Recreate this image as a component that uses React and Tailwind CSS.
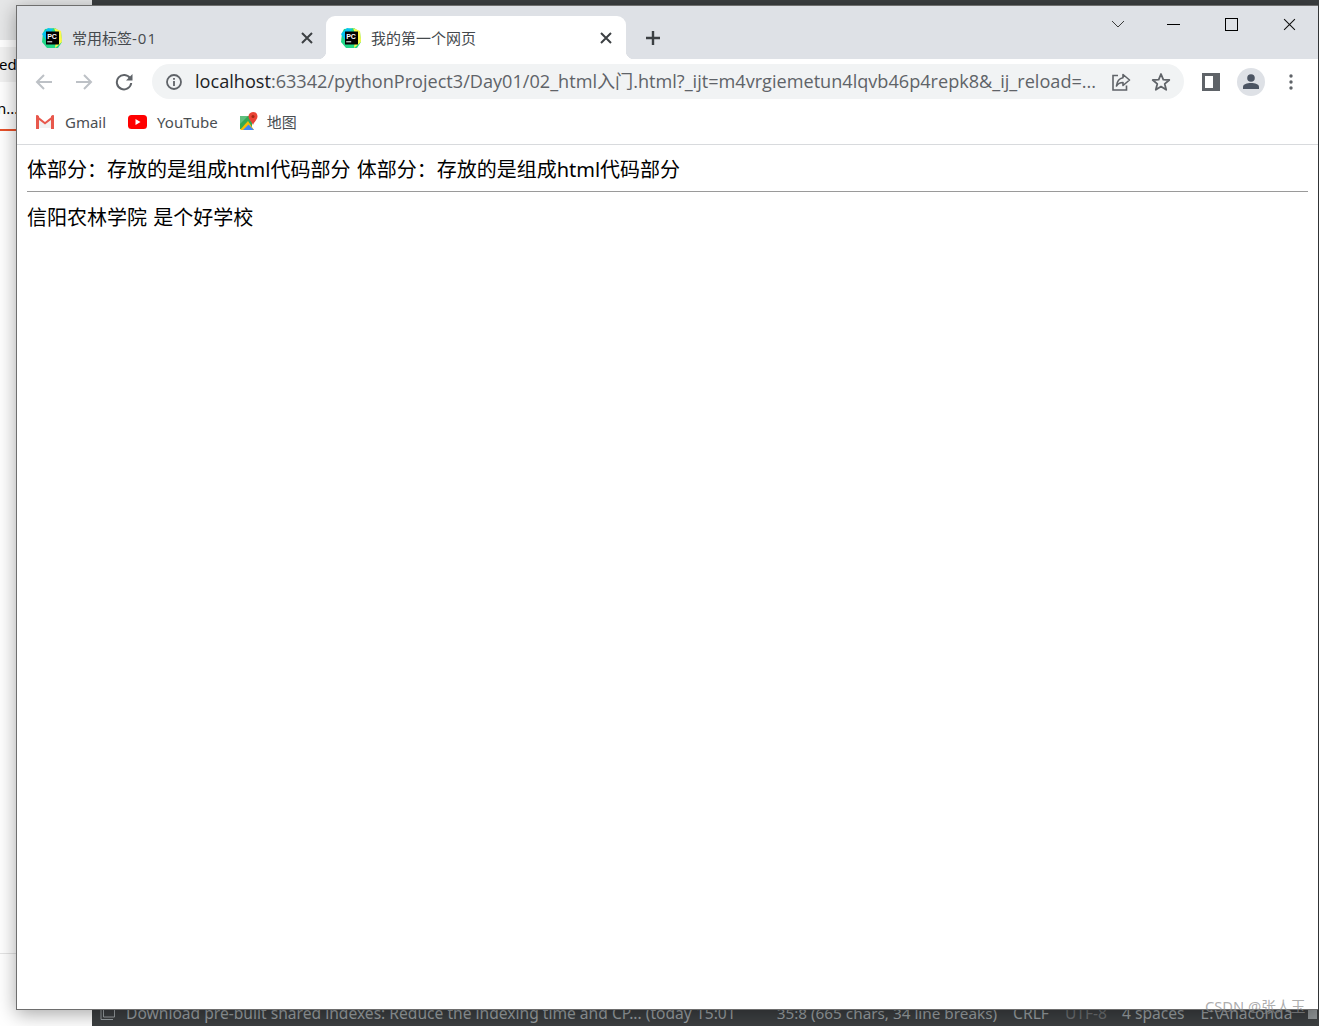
import React from "react";

const ui = { fontFamily: '"Open Sans","Noto Sans CJK SC",sans-serif' };
const cn = { fontFamily: '"Noto Sans","Noto Sans CJK SC",sans-serif' };

function PcIcon() {
  return (
    <svg width="20" height="20" viewBox="0 0 20 20" className="shrink-0">
      <path d="M3 1 L13 0 L19 4 L20 14 L16 20 L5 20 L0 14 L1 5 Z" fill="#21d789" />
      <path d="M12 0 L19 3 L20 13 L15 8 Z" fill="#fcf84a" />
      <path d="M0 6 L6 0 L11 1 L4 12 Z" fill="#07c3f2" />
      <path d="M13 20 L20 14 L19 8 L14 12 Z" fill="#fcf84a" />
      <rect x="4" y="3.5" width="13" height="13" fill="#000" />
      <text x="5.2" y="10.5" fontSize="7" fontWeight="700" fill="#fff" fontFamily="Liberation Sans">PC</text>
      <rect x="5.2" y="13.3" width="5" height="1" fill="#fff" />
    </svg>
  );
}

function X({ size = 12, sw = 2, color = "#3c4043" }) {
  return (
    <svg width={size} height={size} viewBox="0 0 12 12">
      <path d="M1 1 L11 11 M11 1 L1 11" stroke={color} strokeWidth={sw} fill="none" />
    </svg>
  );
}

function Gmail() {
  return (
    <svg width="20" height="16" viewBox="0 0 20 16">
      <path d="M2 2 L10 8.5 L18 2 V14 H2 Z" fill="#f1f1f1" />
      <path d="M1 15 V2 Q1 0.8 2.3 1 L4 2 V15 Z" fill="#e8584c" />
      <path d="M19 15 V2 Q19 0.8 17.7 1 L16 2 V15 Z" fill="#e8584c" />
      <path d="M1.5 1.2 L10 8 L18.5 1.2 L18.5 4 L10 10.5 L1.5 4 Z" fill="#e8584c" />
    </svg>
  );
}

function YouTube() {
  return (
    <svg width="19" height="14" viewBox="0 0 19 14">
      <rect x="0" y="0" width="19" height="14" rx="3.5" fill="#ff0000" />
      <path d="M7.5 4 L12.5 7 L7.5 10 Z" fill="#fff" />
    </svg>
  );
}

function Maps() {
  return (
    <svg width="20" height="20" viewBox="0 0 20 20">
      <path d="M1 4 H13 V17 H1 Z" fill="#34a853" />
      <path d="M1 18 L9 9 L15 18 Z" fill="#fbbc04" />
      <path d="M4 18 L9.5 12.5 L15 18 Z" fill="#4285f4" />
      <path d="M1 4 H9 L1 12 Z" fill="#5fbf7f" />
      <path d="M14 0 C11 0 9.5 2.2 9.5 4.5 C9.5 7.5 13 10 14 13 C15 10 18.5 7.5 18.5 4.5 C18.5 2.2 17 0 14 0 Z" fill="#ea4335" />
      <circle cx="14" cy="4.5" r="1.5" fill="#a52714" />
    </svg>
  );
}

function Tab({ children, active, className }) {
  return (
    <div
      style={ui}
      className={
        "relative flex h-[43px] w-[300px] items-center " +
        (active
          ? "pl-[15px] pr-[14px] rounded-t-[9px] bg-white before:absolute before:bottom-0 before:left-[-8px] before:h-2 before:w-2 before:bg-[radial-gradient(circle_at_0_0,transparent_8px,white_8.5px)] after:absolute after:bottom-0 after:right-[-8px] after:h-2 after:w-2 after:bg-[radial-gradient(circle_at_100%_0,transparent_8px,white_8.5px)] "
          : "pl-[14px] pr-[15px] ") +
        className
      }
    >
      <PcIcon />
      <span className="ml-[10px] flex-1 pt-px text-[15px] leading-none text-[#45494d]">{children}</span>
      <X />
    </div>
  );
}

function Bookmark({ icon, label, className, gap = "ml-[10px]" }) {
  return (
    <div className={"flex items-center " + className}>
      {icon}
      <span style={cn} className={gap + " text-[15px] leading-none text-[#4a4e52]"}>{label}</span>
    </div>
  );
}

export default function App() {
  return (
    <div className="relative h-[1026px] w-[1319px] overflow-hidden bg-white">
      {/* Windows behind the browser */}
      <div className="flex h-full w-full">
        <div className="flex w-[92px] shrink-0 flex-col text-[15px] text-black" style={cn}>
          <div className="h-10 bg-[#e6e7e8]" />
          <div className="h-[7px] bg-white" />
          <div className="flex h-[35px] items-center bg-[#f2f2f2] leading-none"><span className="ml-[-1px]">edit</span></div>
          <div className="flex h-[47px] items-center bg-white leading-none"><span className="ml-[-3px] pt-[5px]">n...</span></div>
          <div className="h-[2px] bg-[#e8512a]" />
          <div className="flex-1 bg-white" />
          <div className="h-px bg-[#e4e4e4]" />
          <div className="h-[72px] bg-white" />
        </div>
        <div className="flex flex-1 flex-col bg-[#3c3f41]">
          <div className="flex-1" />
          <div style={cn} className="flex h-[24px] items-center text-[15.6px] leading-none whitespace-nowrap text-[#9aa0a3]">
            <svg width="16" height="16" viewBox="0 0 16 16" className="ml-[8px]">
              <path d="M1 1.5 V13.5 H13 M3.5 1.5 H14.5 V11 H3.5 Z" stroke="#9aa0a3" fill="none" />
            </svg>
            <span className="ml-[10px]">Download pre-built shared indexes: Reduce the indexing time and CP... (today 15:01</span>
            <span className="ml-[41px] text-[15.3px]">35:8 (665 chars, 34 line breaks)</span>
            <span className="ml-[16px]">CRLF</span>
            <span className="ml-[16px] text-[#6d7072]">UTF-8</span>
            <span className="ml-[15px]">4 spaces</span>
            <span className="ml-[16px]">E:\Anaconda</span>
            <span className="ml-[16px] h-[9px] w-[9px] bg-[#8f9496]" />
          </div>
        </div>
      </div>

      {/* Browser window */}
      <div className="absolute left-[16px] top-[5px] flex h-[1005px] w-[1302px] flex-col border border-r-0 border-[#6e6e6e] bg-white shadow-[0_4px_18px_rgba(0,0,0,0.35)]">
        {/* Tab strip */}
        <div className="flex h-[53px] shrink-0 items-start bg-[#dee1e6]">
          <Tab className="ml-[11px] mt-[10px]">常用标签<span className="tracking-[1px]">-01</span></Tab>
          <Tab active className="ml-[-2px] mt-[10px]">我的第一个网页</Tab>
          <div className="ml-[13px] mt-[18px] flex h-7 w-7 items-center justify-center">
            <svg width="16" height="16" viewBox="0 0 16 16">
              <path d="M8 1 V15 M1 8 H15" stroke="#3c4043" strokeWidth="2.4" />
            </svg>
          </div>
          <div className="ml-auto flex h-9 items-center">
            <div className="flex h-9 w-[54px] items-center justify-center">
              <svg width="14" height="8" viewBox="0 0 14 8"><path d="M1 1 L7 7 L13 1" stroke="#3b3b3b" fill="none" /></svg>
            </div>
            <div className="flex h-9 w-[57px] items-center justify-center">
              <div className="h-px w-[13px] bg-black" />
            </div>
            <div className="flex h-9 w-[59px] items-center justify-center">
              <div className="h-[13px] w-[13px] border border-black" />
            </div>
            <div className="flex h-9 w-[57px] items-center justify-center">
              <X size={13} sw={1} color="#111" />
            </div>
          </div>
        </div>

        {/* Toolbar */}
        <div className="flex h-[45px] shrink-0 items-center bg-white pl-[7px]">
          <div className="flex h-9 w-10 items-center justify-center">
            <svg width="18" height="18" viewBox="0 0 18 18"><path d="M17 9 H2 M9 2 L2 9 L9 16" stroke="#bdc1c6" strokeWidth="2" fill="none" /></svg>
          </div>
          <div className="flex h-9 w-10 items-center justify-center">
            <svg width="18" height="18" viewBox="0 0 18 18"><path d="M1 9 H16 M9 2 L16 9 L9 16" stroke="#bdc1c6" strokeWidth="2" fill="none" /></svg>
          </div>
          <div className="flex h-9 w-10 items-center justify-center">
            <svg width="18" height="18" viewBox="0 0 18 18">
              <path d="M15.2 5.4 A7.2 7.2 0 1 0 16.2 10" stroke="#5f6368" strokeWidth="2" fill="none" />
              <path d="M17.5 1 V7.5 H11 Z" fill="#5f6368" />
            </svg>
          </div>
          <div className="ml-2 flex h-[35px] w-[1032px] items-center rounded-full bg-[#f1f3f4] pl-[13px]">
            <svg width="18" height="18" viewBox="0 0 18 18" className="shrink-0">
              <circle cx="9" cy="9" r="7" stroke="#5f6368" strokeWidth="1.8" fill="none" />
              <path d="M9 8 V13 M9 5 V6.8" stroke="#5f6368" strokeWidth="1.8" />
            </svg>
            <div style={ui} className="ml-[12px] mb-[2px] w-[904px] shrink-0 overflow-hidden text-[18.12px] leading-[26px] whitespace-nowrap text-[#5f6368]">
              <span className="text-[#202124]">localhost</span>:63342/pythonProject3/Day01/02_html入门.html?_ijt=m4vrgiemetun4lqvb46p4repk8&amp;_ij_reload=...
            </div>
            <svg width="20" height="20" viewBox="0 0 20 20" className="ml-[12px] shrink-0">
              <path d="M7 3.5 H2 V18 H15.5 V13.5" stroke="#5f6368" strokeWidth="1.6" fill="none" />
              <path d="M12 2.5 L18.5 8 L12 13.5 V10.5 C9 10.5 7 11.5 5.5 14 C6 9.5 8.5 6.3 12 5.8 Z" stroke="#5f6368" strokeWidth="1.6" fill="none" strokeLinejoin="round" />
            </svg>
            <svg width="20" height="20" viewBox="0 0 20 20" className="ml-[20px] shrink-0">
              <path d="M10 2 L12.3 7.6 L18.3 8 L13.7 11.9 L15.2 17.8 L10 14.6 L4.8 17.8 L6.3 11.9 L1.7 8 L7.7 7.6 Z" stroke="#5f6368" strokeWidth="1.8" fill="none" strokeLinejoin="round" />
            </svg>
          </div>
          <div className="ml-[7px] flex h-9 w-10 items-center justify-center">
            <svg width="18" height="18" viewBox="0 0 18 18">
              <path d="M0 0 H18 V18 H0 Z M3 3 V15 H11 V3 Z" fill="#5f6368" fillRule="evenodd" />
            </svg>
          </div>
          <div className="flex h-9 w-10 items-center justify-center">
            <div className="flex h-7 w-7 items-center justify-center rounded-full bg-[#dee1e6]">
              <svg width="16" height="15" viewBox="0 0 16 15">
                <circle cx="8" cy="4" r="3.8" fill="#4c5563" />
                <path d="M0 15 V13 C0 10 4 9 8 9 C12 9 16 10 16 13 V15 Z" fill="#4c5563" />
              </svg>
            </div>
          </div>
          <div className="flex h-9 w-10 items-center justify-center">
            <svg width="4" height="16" viewBox="0 0 4 16">
              <circle cx="2" cy="2" r="1.7" fill="#5f6368" />
              <circle cx="2" cy="8" r="1.7" fill="#5f6368" />
              <circle cx="2" cy="14" r="1.7" fill="#5f6368" />
            </svg>
          </div>
        </div>

        {/* Bookmarks */}
        <div className="flex h-[41px] shrink-0 items-center border-b border-[#d8dadd] bg-white pb-[4px] pl-[18px]">
          <Bookmark icon={<Gmail />} label="Gmail" />
          <Bookmark icon={<YouTube />} label="YouTube" className="ml-[22px]" />
          <Bookmark icon={<Maps />} label="地图" className="ml-[21px]" gap="ml-[8px]" />
        </div>

        {/* Page */}
        <div style={cn} className="flex-1 bg-white px-[10px] text-[20px] leading-[28px] text-black [word-spacing:1px]">
          <p className="mt-[11px]">体部分：存放的是组成html代码部分 体部分：存放的是组成html代码部分</p>
          <hr className="mt-[7px] border-t border-[#9a9a9a]" />
          <p className="mt-[12px]">信阳农林学院 是个好学校</p>
        </div>
      </div>

      {/* Watermark */}
      <div style={cn} className="absolute left-[1205px] top-[999px] text-[14.7px] leading-none text-[#8a8a8a]/70">CSDN @张人玉</div>
    </div>
  );
}
